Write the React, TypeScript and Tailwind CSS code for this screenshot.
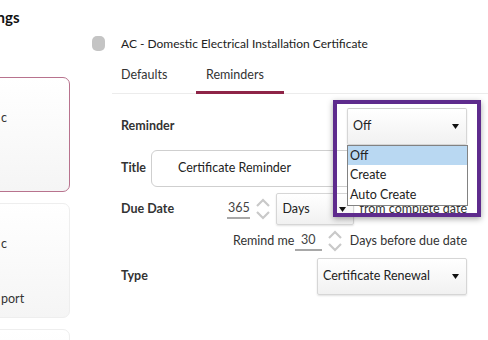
import type { ReactNode } from "react";

const font = { fontFamily: "Lato, 'Noto Sans', sans-serif" };

function Caret() {
  return (
    <svg width="7" height="5" viewBox="0 0 7 5" className="shrink-0">
      <path d="M0 0h7L3.5 5z" fill="#111" />
    </svg>
  );
}

function Spinner() {
  return (
    <svg width="16" height="24" viewBox="0 0 16 24" className="shrink-0">
      <path d="M2 9l6-6 6 6" fill="none" stroke="#c9c9c9" strokeWidth="2.2" />
      <path d="M2 15l6 6 6-6" fill="none" stroke="#c9c9c9" strokeWidth="2.2" />
    </svg>
  );
}

function Select({ value, className = "" }: { value: string; className?: string }) {
  return (
    <div
      className={`flex items-center justify-between border border-[#d6d6d6] rounded-[2px] bg-gradient-to-b from-white to-[#f1f1f1] shadow-[0_1px_2px_rgba(0,0,0,0.12)] pl-[5px] pr-[7px] text-[12.5px] text-[#222] ${className}`}
    >
      <span>{value}</span>
      <Caret />
    </div>
  );
}

function NumberField({ value, width }: { value: string; width: string }) {
  return (
    <div className="flex items-center gap-[5px]">
      <div className={`${width} border-b-2 border-[#a8a8a8] text-center text-[12.5px] text-[#444] leading-[18px]`}>
        {value}
      </div>
      <Spinner />
    </div>
  );
}

function Label({ children, className = "" }: { children: ReactNode; className?: string }) {
  return <span className={`font-bold text-[12.5px] text-[#333] ${className}`}>{children}</span>;
}

function Card({ active, lines }: { active?: boolean; lines: string[] }) {
  return (
    <div
      className={`-ml-[80px] w-[150px] h-[115px] rounded-[7px] border bg-gradient-to-b from-white to-[#f5f5f5] shrink-0 ${
        active ? "border-[#b8738e]" : "border-[#eeeeee]"
      }`}
    >
      <div className="pl-[80px] pt-[31px] flex flex-col text-[12.5px] text-[#333] leading-[18px]">
        {lines.map((l, i) => (
          <div key={i} className={i === 1 ? "mt-[37px]" : ""}>
            {l}
          </div>
        ))}
      </div>
    </div>
  );
}

export default function App() {
  return (
    <div className="relative w-[488px] h-[340px] overflow-hidden bg-white flex" style={font}>
      {/* Left list, clipped by the window edge */}
      <aside className="w-[71px] shrink-0 overflow-hidden flex flex-col">
        <div className="h-[28px] shrink-0 pt-[5px] overflow-hidden whitespace-nowrap">
          <span className="-ml-[34px] font-bold text-[15px] text-[#111] leading-[20px]">Settings</span>
        </div>
        <div className="mt-[49px] shrink-0 flex flex-col gap-[11px]">
          <Card active lines={["c"]} />
          <Card lines={["c", "port"]} />
          <Card lines={[]} />
        </div>
      </aside>

      {/* Right content */}
      <main className="flex-1 flex flex-col">
        <div className="mt-[36px] flex items-center h-[15px]">
          <div className="ml-[21px] w-[13px] h-[15px] rounded-[5px] bg-[#c4c4c4]" />
          <span className="ml-[16px] text-[12px] text-[#222] whitespace-nowrap">
            AC - Domestic Electrical Installation Certificate
          </span>
        </div>

        <div className="mt-[13px] ml-[41px] h-[30px] flex border-b border-[#ececec] text-[12.5px] text-[#333]">
          <div className="w-[84px] pl-[9px] pt-[2px]">Defaults</div>
          <div className="w-[88px] pl-[10px] pt-[2px] border-b-[3px] border-[#8e2447] -mb-px">Reminders</div>
        </div>

        <div className="ml-[50px] w-[346px] flex flex-col">
          <div className="mt-[14px] h-[37px] flex items-center">
            <Label>Reminder</Label>
            <div className="relative ml-auto">
              <Select value="Off" className="w-[120px] h-[37px] border-t-[#cfcfcf]" />
              <div className="absolute left-0 top-full w-[121px] h-[61px] bg-white border border-[#828282] text-[12.5px] text-[#222] flex flex-col z-10">
                <div className="h-[19px] bg-[#b9d8f2] pl-[2px] leading-[19px]">Off</div>
                <div className="h-[20px] pl-[2px] leading-[20px]">Create</div>
                <div className="h-[20px] pl-[2px] leading-[20px]">Auto Create</div>
              </div>
            </div>
          </div>

          <div className="mt-[5px] h-[37px] flex items-center">
            <Label className="w-[30px]">Title</Label>
            <div className="flex-1 h-[37px] border border-[#cfcfcf] rounded-[6px] flex items-center pl-[26px] text-[12.5px] text-[#222]">
              Certificate Reminder
            </div>
          </div>

          <div className="mt-[6px] h-[32px] flex items-center">
            <Label className="w-[108px]">Due Date</Label>
            <NumberField value="365" width="w-[23px]" />
            <Select value="Days" className="ml-[5px] w-[78px] h-[32px]" />
            <span className="ml-[6px] text-[12.5px] text-[#333] whitespace-nowrap">from complete date</span>
          </div>

          <div className="mt-[3px] h-[26px] flex items-center text-[12.5px] text-[#333]">
            <span className="ml-[112px] w-[65px]">Remind me</span>
            <NumberField value="30" width="w-[27px]" />
            <span className="ml-[7px] whitespace-nowrap">Days before due date</span>
          </div>

          <div className="mt-[4px] h-[37px] flex items-center">
            <Label>Type</Label>
            <Select value="Certificate Renewal" className="ml-auto w-[150px] h-[37px]" />
          </div>
        </div>
      </main>

      {/* Highlight annotation */}
      <div className="absolute left-[333px] top-[100px] w-[148px] h-[117px] border-[4px] border-[#5e2b8d] shadow-[0_2px_6px_rgba(0,0,0,0.35)] pointer-events-none z-20" />
    </div>
  );
}
